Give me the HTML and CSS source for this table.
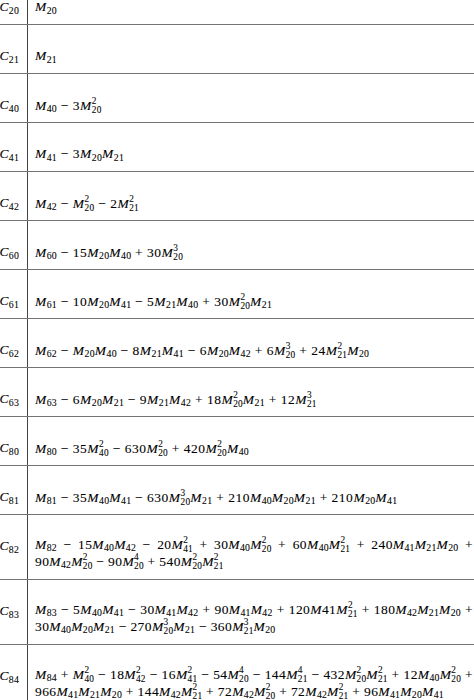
FILE: index.html
```html
<!DOCTYPE html>
<html>
<head>
<meta charset="utf-8">
<link rel="stylesheet" href="styles.css">
</head>
<body>
<div class="tbl">
  <div class="row"><div class="lab"><span><i>C</i><sub>20</sub></span></div><div class="f"><i>M</i><sub>20</sub></div></div>
  <div class="row"><div class="lab"><span><i>C</i><sub>21</sub></span></div><div class="f"><i>M</i><sub>21</sub></div></div>
  <div class="row"><div class="lab"><span><i>C</i><sub>40</sub></span></div><div class="f"><i>M</i><sub>40</sub> &minus; 3<i>M</i><span class="ss"><span>2</span><span>20</span></span></div></div>
  <div class="row"><div class="lab"><span><i>C</i><sub>41</sub></span></div><div class="f"><i>M</i><sub>41</sub> &minus; 3<i>M</i><sub>20</sub><i>M</i><sub>21</sub></div></div>
  <div class="row"><div class="lab"><span><i>C</i><sub>42</sub></span></div><div class="f"><i>M</i><sub>42</sub> &minus; <i>M</i><span class="ss"><span>2</span><span>20</span></span> &minus; 2<i>M</i><span class="ss"><span>2</span><span>21</span></span></div></div>
  <div class="row"><div class="lab"><span><i>C</i><sub>60</sub></span></div><div class="f"><i>M</i><sub>60</sub> &minus; 15<i>M</i><sub>20</sub><i>M</i><sub>40</sub> + 30<i>M</i><span class="ss"><span>3</span><span>20</span></span></div></div>
  <div class="row"><div class="lab"><span><i>C</i><sub>61</sub></span></div><div class="f"><i>M</i><sub>61</sub> &minus; 10<i>M</i><sub>20</sub><i>M</i><sub>41</sub> &minus; 5<i>M</i><sub>21</sub><i>M</i><sub>40</sub> + 30<i>M</i><span class="ss"><span>2</span><span>20</span></span><i>M</i><sub>21</sub></div></div>
  <div class="row"><div class="lab"><span><i>C</i><sub>62</sub></span></div><div class="f"><i>M</i><sub>62</sub> &minus; <i>M</i><sub>20</sub><i>M</i><sub>40</sub> &minus; 8<i>M</i><sub>21</sub><i>M</i><sub>41</sub> &minus; 6<i>M</i><sub>20</sub><i>M</i><sub>42</sub> + 6<i>M</i><span class="ss"><span>3</span><span>20</span></span> + 24<i>M</i><span class="ss"><span>2</span><span>21</span></span><i>M</i><sub>20</sub></div></div>
  <div class="row"><div class="lab"><span><i>C</i><sub>63</sub></span></div><div class="f"><i>M</i><sub>63</sub> &minus; 6<i>M</i><sub>20</sub><i>M</i><sub>21</sub> &minus; 9<i>M</i><sub>21</sub><i>M</i><sub>42</sub> + 18<i>M</i><span class="ss"><span>2</span><span>20</span></span><i>M</i><sub>21</sub> + 12<i>M</i><span class="ss"><span>3</span><span>21</span></span></div></div>
  <div class="row"><div class="lab"><span><i>C</i><sub>80</sub></span></div><div class="f"><i>M</i><sub>80</sub> &minus; 35<i>M</i><span class="ss"><span>2</span><span>40</span></span> &minus; 630<i>M</i><span class="ss"><span>2</span><span>20</span></span> + 420<i>M</i><span class="ss"><span>2</span><span>20</span></span><i>M</i><sub>40</sub></div></div>
  <div class="row"><div class="lab"><span><i>C</i><sub>81</sub></span></div><div class="f"><i>M</i><sub>81</sub> &minus; 35<i>M</i><sub>40</sub><i>M</i><sub>41</sub> &minus; 630<i>M</i><span class="ss"><span>3</span><span>20</span></span><i>M</i><sub>21</sub> + 210<i>M</i><sub>40</sub><i>M</i><sub>20</sub><i>M</i><sub>21</sub> + 210<i>M</i><sub>20</sub><i>M</i><sub>41</sub></div></div>
  <div class="row two"><div class="lab"><span><i>C</i><sub>82</sub></span></div><div class="f">
    <div class="ln j"><i>M</i><sub>82</sub> &minus; 15<i>M</i><sub>40</sub><i>M</i><sub>42</sub> &minus; 20<i>M</i><span class="ss"><span>2</span><span>41</span></span> + 30<i>M</i><sub>40</sub><i>M</i><span class="ss"><span>2</span><span>20</span></span> + 60<i>M</i><sub>40</sub><i>M</i><span class="ss"><span>2</span><span>21</span></span> + 240<i>M</i><sub>41</sub><i>M</i><sub>21</sub><i>M</i><sub>20</sub> +</div>
    <div class="ln">90<i>M</i><sub>42</sub><i>M</i><span class="ss"><span>2</span><span>20</span></span> &minus; 90<i>M</i><span class="ss"><span>4</span><span>20</span></span> + 540<i>M</i><span class="ss"><span>2</span><span>20</span></span><i>M</i><span class="ss"><span>2</span><span>21</span></span></div>
  </div></div>
  <div class="row two"><div class="lab"><span><i>C</i><sub>83</sub></span></div><div class="f">
    <div class="ln j"><i>M</i><sub>83</sub> &minus; 5<i>M</i><sub>40</sub><i>M</i><sub>41</sub> &minus; 30<i>M</i><sub>41</sub><i>M</i><sub>42</sub> + 90<i>M</i><sub>41</sub><i>M</i><sub>42</sub> + 120<i>M</i>41<i>M</i><span class="ss"><span>2</span><span>21</span></span> + 180<i>M</i><sub>42</sub><i>M</i><sub>21</sub><i>M</i><sub>20</sub> +</div>
    <div class="ln">30<i>M</i><sub>40</sub><i>M</i><sub>20</sub><i>M</i><sub>21</sub> &minus; 270<i>M</i><span class="ss"><span>3</span><span>20</span></span><i>M</i><sub>21</sub> &minus; 360<i>M</i><span class="ss"><span>3</span><span>21</span></span><i>M</i><sub>20</sub></div>
  </div></div>
  <div class="row two"><div class="lab"><span><i>C</i><sub>84</sub></span></div><div class="f">
    <div class="ln j"><i>M</i><sub>84</sub> + <i>M</i><span class="ss"><span>2</span><span>40</span></span> &minus; 18<i>M</i><span class="ss"><span>2</span><span>42</span></span> &minus; 16<i>M</i><span class="ss"><span>2</span><span>41</span></span> &minus; 54<i>M</i><span class="ss"><span>4</span><span>20</span></span> &minus; 144<i>M</i><span class="ss"><span>4</span><span>21</span></span> &minus; 432<i>M</i><span class="ss"><span>2</span><span>20</span></span><i>M</i><span class="ss"><span>2</span><span>21</span></span> + 12<i>M</i><sub>40</sub><i>M</i><span class="ss"><span>2</span><span>20</span></span> +</div>
    <div class="ln">966<i>M</i><sub>41</sub><i>M</i><sub>21</sub><i>M</i><sub>20</sub> + 144<i>M</i><sub>42</sub><i>M</i><span class="ss"><span>2</span><span>21</span></span> + 72<i>M</i><sub>42</sub><i>M</i><span class="ss"><span>2</span><span>20</span></span> + 72<i>M</i><sub>42</sub><i>M</i><span class="ss"><span>2</span><span>21</span></span> + 96<i>M</i><sub>41</sub><i>M</i><sub>20</sub><i>M</i><sub>41</sub></div>
  </div></div>
</div>
</body>
</html>
```
FILE: styles.css
```css
html, body {
  margin: 0;
  padding: 0;
  background: #ffffff;
  overflow: hidden;
}
body {
  font-family: "Liberation Serif", "Times New Roman", serif;
  color: #000000;
  -webkit-text-stroke: 0.08px #000000;
}
.tbl {
  margin-top: -24px;
}
.row {
  display: grid;
  grid-template-columns: 28px 1fr;
  height: 49px;
  box-sizing: border-box;
  border-bottom: 1px solid #747474;
}
.row.two {
  height: 65px;
}
.lab {
  display: flex;
  justify-content: flex-end;
  align-items: flex-start;
  border-right: 1px solid #444444;
  padding: 23px 8px 0 0;
  font-size: 13.5px;
  line-height: 16px;
  white-space: nowrap;
  letter-spacing: 0.2px;
}
.two .lab {
  padding-top: 23px;
}
.f {
  padding: 23px 1px 0 7px;
  font-size: 13.5px;
  line-height: 16px;
  letter-spacing: 0.5px;
  white-space: nowrap;
  min-width: 0;
}
.two .f {
  padding-top: 21px;
  white-space: normal;
  letter-spacing: 0.4px;
}
.ln {
  white-space: nowrap;
}
.ln.j {
  white-space: normal;
  text-align: justify;
  text-align-last: justify;
}
i {
  font-style: italic;
}
sub {
  font-size: 9.8px;
  vertical-align: -2.5px;
  line-height: 1;
  letter-spacing: 0.2px;
}
.ss {
  display: inline-flex;
  flex-direction: column;
  font-size: 9.3px;
  line-height: 8.5px;
  vertical-align: 5.5px;
  letter-spacing: 0.2px;
}
```
